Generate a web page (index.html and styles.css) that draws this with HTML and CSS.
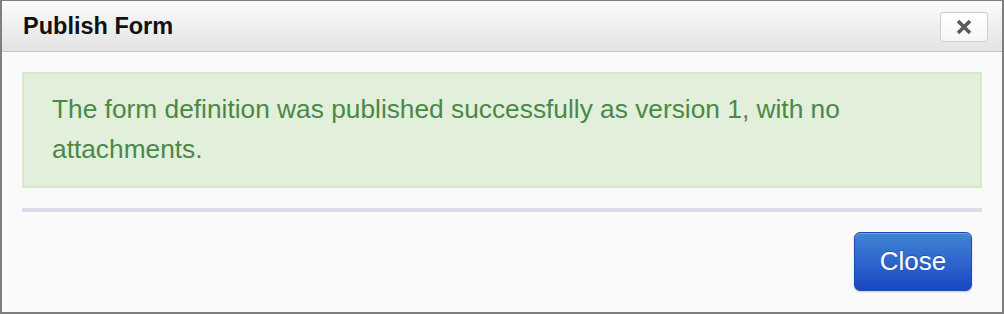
FILE: index.html
```html
<!DOCTYPE html>
<html>
<head>
<meta charset="utf-8">
<link rel="stylesheet" href="styles.css">
</head>
<body>
<div class="dialog">
  <div class="dialog-header">
    <h3 class="dialog-title">Publish Form</h3>
    <button class="dismiss" aria-label="Close">
      <svg width="18" height="16" viewBox="0 0 18 16"><path d="M3 2 L15 14 M15 2 L3 14" stroke="#5a5a5a" stroke-width="3.6" stroke-linecap="butt"/></svg>
    </button>
  </div>
  <div class="dialog-body">
    <div class="alert-success">The form definition was published successfully as version 1, with no attachments.</div>
    <div class="divider"></div>
    <div class="actions">
      <button class="btn-primary">Close</button>
    </div>
  </div>
</div>
</body>
</html>
```

FILE: styles.css
```css
html, body {
  margin: 0;
  padding: 0;
  background: #fafafa;
}
body {
  font-family: "Liberation Sans", Arial, sans-serif;
}
.dialog {
  width: 1004px;
  height: 314px;
  box-sizing: border-box;
  border: 2px solid #7f7f7f;
  border-top-width: 1px;
  background: #fafafa;
  display: flex;
  flex-direction: column;
}
.dialog-header {
  height: 50px;
  border-bottom: 1px solid #c6c6c6;
  background: linear-gradient(#fbfbfb, #e3e3e3);
  display: flex;
  align-items: center;
  justify-content: space-between;
  padding: 0 14px 0 21px;
}
.dialog-title {
  margin: 0;
  font-size: 23.5px;
  font-weight: bold;
  color: #111;
}
.dismiss {
  width: 48px;
  height: 30px;
  box-sizing: border-box;
  border: 1px solid #cfcfcf;
  border-radius: 3px;
  background: linear-gradient(#ffffff, #f6f6f6);
  display: flex;
  align-items: center;
  justify-content: center;
  padding: 0;
  margin-top: 2px;
}
.dismiss svg { display: block; }
.dialog-body {
  padding: 20px 20px 0 20px;
  display: flex;
  flex-direction: column;
}
.alert-success {
  border: 2px solid #d6e8c8;
  background: #e2efda;
  color: #4b8848;
  font-size: 26.3px;
  line-height: 40px;
  padding: 15px 28px 17px 28px;
}
.divider {
  margin-top: 20px;
  height: 4px;
  background: #dcdcec;
}
.actions {
  display: flex;
  justify-content: flex-end;
  padding: 20px 10px 0 0;
}
.btn-primary {
  width: 118px;
  height: 59px;
  box-sizing: border-box;
  border: 1px solid #1d4bb0;
  border-radius: 6px;
  background: linear-gradient(#4185d5, #1a46c4);
  color: #fff;
  font-family: "Liberation Sans", Arial, sans-serif;
  font-size: 26px;
  padding: 0;
  box-shadow: inset 0 1px 0 rgba(255,255,255,0.25), 0 1px 2px rgba(0,0,0,0.2);
  text-shadow: 0 -1px 0 rgba(0,0,0,0.2);
}
```
